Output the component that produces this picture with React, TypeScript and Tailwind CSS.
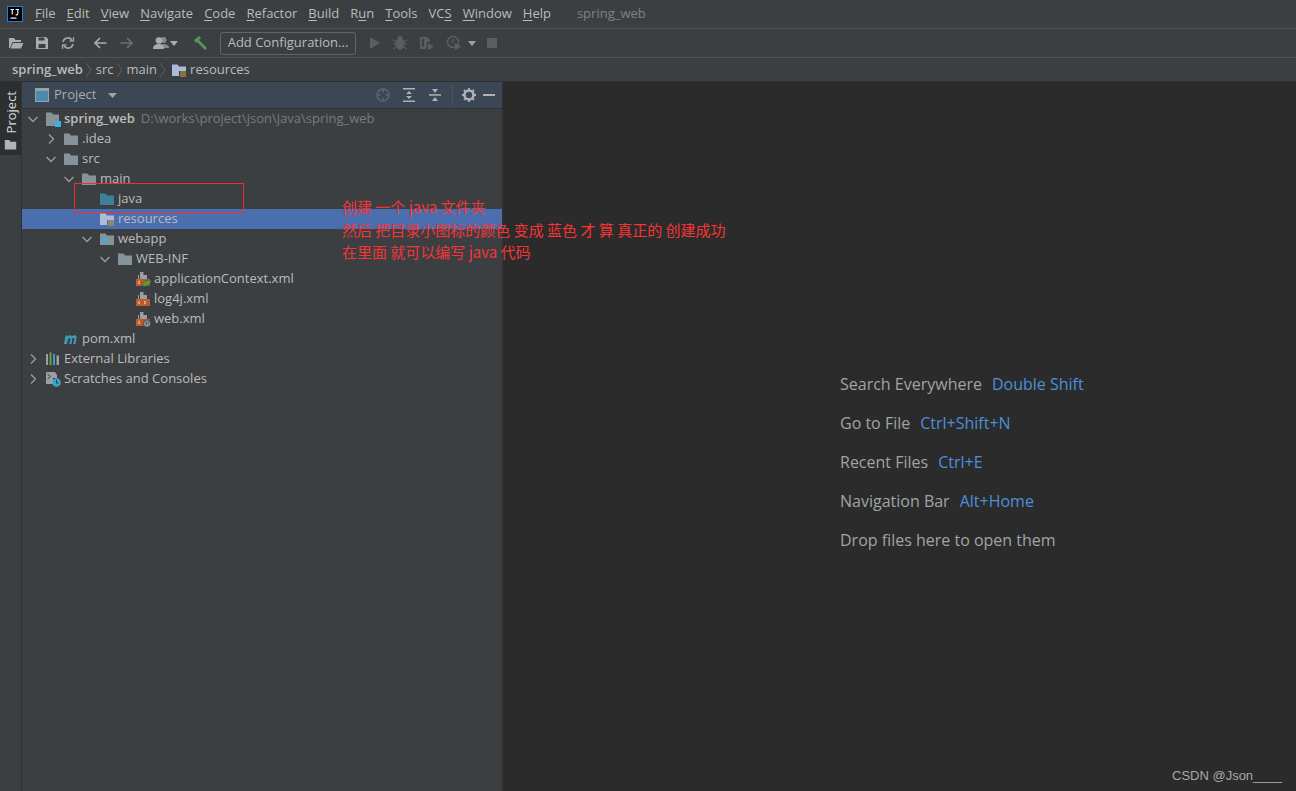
import React from "react";

const F = "font-['Open_Sans','Noto_Sans',sans-serif]";

function Folder({ c = "#87939a", size = 16 }: { c?: string; size?: number }) {
  return (
    <svg width={size} height={size} viewBox="0 0 16 16" className="shrink-0">
      <path d="M1 2.5h5.5L8 4.5h7V14H1z" fill={c} />
    </svg>
  );
}

function Chevron({ open }: { open: boolean }) {
  return (
    <svg width="12" height="12" viewBox="0 0 12 12" className="shrink-0" fill="none" stroke="#9a9d9f" strokeWidth="1.3">
      {open ? <path d="M1.5 4L6 8.5 10.5 4" /> : <path d="M4 1.5L8.5 6 4 10.5" />}
    </svg>
  );
}

function Lines() {
  return <path d="M9 10h6M9 12h6M9 14h6" stroke="#d6a032" strokeWidth="1.1" />;
}

function RootIcon() {
  return (
    <svg width="16" height="16" viewBox="0 0 16 16" className="shrink-0">
      <path d="M1 1.5h5.5L8 3.5h6V10H10v5H1z" fill="#87939a" />
      <rect x="10" y="10" width="6" height="6" fill="#3cb1e0" />
    </svg>
  );
}

function ResIcon() {
  return (
    <svg width="16" height="16" viewBox="0 0 16 16" className="shrink-0">
      <path d="M1 2.5h5.5L8 4.5h7V9H8v5H1z" fill="#a9bcd8" />
      <Lines />
    </svg>
  );
}

function WebIcon() {
  return (
    <svg width="16" height="16" viewBox="0 0 16 16" className="shrink-0">
      <path d="M1 2.5h5.5L8 4.5h7V14H1z" fill="#87939a" />
      <circle cx="6" cy="9" r="2.6" fill="#3cb1e0" />
    </svg>
  );
}

function XmlIcon({ badge }: { badge?: "leaf" | "globe" }) {
  return (
    <svg width="16" height="16" viewBox="0 0 16 16" className="shrink-0">
      <path d="M5 1h3.5v3H12v4H5z M3 4h1v4H3z" fill="#9a9fa3" />
      <rect x="1" y="8" width="14" height="7" fill="#bd5b2b" />
      <path d="M5 10l-2 1.5 2 1.5" stroke="#e8e8e8" fill="none" strokeWidth="0.9" />
      {!badge && <path d="M9 10l2 1.5-2 1.5" stroke="#e8e8e8" fill="none" strokeWidth="0.9" />}
      {badge === "leaf" && <path d="M7 15c0-4 3-6 9-6 0 5-3 7-9 6z" fill="#5f9a3a" stroke="#3c3f41" strokeWidth="0.6" />}
      {badge === "globe" && (
        <g>
          <circle cx="12" cy="12.5" r="3.7" fill="#8d9499" stroke="#3c3f41" strokeWidth="0.8" />
          <path d="M10 11l2 1-1 2M13 10.5l1 2" stroke="#3c3f41" strokeWidth="0.8" fill="none" />
        </g>
      )}
    </svg>
  );
}

function PomIcon() {
  return (
    <svg width="18" height="16" viewBox="0 0 18 16" className="shrink-0">
      <path
        d="M2 13l1.6-8.5h2l-.2 1c.9-.8 1.8-1.2 2.6-1.2 1 0 1.6.5 1.8 1.3.9-.9 1.9-1.3 2.8-1.3 1.5 0 2.2 1 1.9 2.6L13.500 13h-2.200l1-5c.1-.8-.1-1.100-.7-1.100-.5 0-1 .3-1.500.8L9.500 13H7.300l1-5c.1-.8-.1-1.100-.7-1.100-.5 0-1 .3-1.500.8L5 13z"
        fill="#3f9ab3"
      />
    </svg>
  );
}

function LibIcon() {
  return (
    <svg width="16" height="16" viewBox="0 0 16 16" className="shrink-0">
      <rect x="1" y="3" width="2" height="11" fill="#9a9fa3" />
      <rect x="4.500" y="1.500" width="2" height="12.500" fill="#62a33f" />
      <rect x="8" y="3" width="2" height="11" fill="#3e9ac6" />
      <rect x="11.500" y="4.500" width="2.500" height="9.500" fill="#9a9fa3" />
    </svg>
  );
}

function ScratchIcon() {
  return (
    <svg width="16" height="16" viewBox="0 0 16 16" className="shrink-0">
      <path d="M1 1h9l2 3v3H8v6H1z" fill="#9a9fa3" />
      <path d="M2.500 3l3 2.500-3 2.500" stroke="#3c3f41" strokeWidth="1" fill="none" />
      <circle cx="11.500" cy="11.500" r="4.300" fill="#3ba3c9" />
      <path d="M11.500 9v3h2" stroke="#1f3a45" strokeWidth="1" fill="none" />
    </svg>
  );
}

type RowP = {
  pad: string;
  open?: boolean;
  icon: React.ReactNode;
  children: React.ReactNode;
  sel?: boolean;
};

function Row({ pad, open, icon, children, sel }: RowP) {
  return (
    <div className={`flex h-5 items-center ${pad} ${sel ? "bg-[#4b6eaf]" : ""}`}>
      <span className="flex w-[14px] shrink-0 justify-center">{open !== undefined && <Chevron open={open} />}</span>
      <span className="ml-[5px] flex w-4 shrink-0 justify-center">{icon}</span>
      <span className="ml-[3px] flex items-baseline whitespace-nowrap">{children}</span>
    </div>
  );
}

function Menu({ pre = "", u, post = "", cls = "" }: { pre?: string; u: string; post?: string; cls?: string }) {
  return (
    <span className={`whitespace-nowrap ${cls}`}>
      {pre}
      <span className="underline underline-offset-2">{u}</span>
      {post}
    </span>
  );
}

function Sep() {
  return <span className="h-[19px] w-px shrink-0 bg-[#515151]" />;
}

function Crumb() {
  return (
    <svg width="8" height="16" viewBox="0 0 8 16" className="shrink-0 mx-[2px]" fill="none" stroke="#5c5f61" strokeWidth="1">
      <path d="M1 1l5 7-5 7" />
    </svg>
  );
}

function Hint({ a, b }: { a: string; b: string }) {
  return (
    <div className="flex h-[39px] items-center whitespace-nowrap text-[16px]">
      <span className="text-[#a0a4a6]">{a}</span>
      <span className="ml-[10px] text-[#4d8fdc]">{b}</span>
    </div>
  );
}

export default function App() {
  return (
    <div className={`relative flex h-[791px] w-[1296px] flex-col overflow-hidden bg-[#3c3f41] text-[13px] text-[#bbbbbb] ${F}`}>
      {/* menu bar */}
      <div className="flex h-[29px] shrink-0 items-center border-b border-[#515151] pl-[7px]">
        <svg width="16" height="16" viewBox="0 0 16 16" className="shrink-0">
          <rect x="0.500" y="0.500" width="15" height="15" fill="#000" stroke="#1c7fe0" />
          <path d="M3.500 3.500h3.500M5.200 3.500v5M8.500 3.500h3.500M10.800 3.500v4.300c0 .8-.6 1.200-2.200 1" stroke="#fff" strokeWidth="1.100" fill="none" />
          <rect x="3.500" y="11.500" width="6" height="1.200" fill="#fff" />
        </svg>
        <div className="ml-3 flex items-center gap-[11px] text-[13px]">
          <Menu u="F" post="ile" />
          <Menu u="E" post="dit" />
          <Menu u="V" post="iew" />
          <Menu u="N" post="avigate" />
          <Menu u="C" post="ode" />
          <Menu u="R" post="efactor" />
          <Menu u="B" post="uild" />
          <Menu pre="R" u="u" post="n" />
          <Menu u="T" post="ools" />
          <Menu pre="VC" u="S" />
          <Menu u="W" post="indow" />
          <Menu u="H" post="elp" />
        </div>
        <span className="ml-[26px] text-[#7d8285]">spring_web</span>
      </div>

      {/* toolbar */}
      <div className="flex h-[29px] shrink-0 items-center border-b border-[#515151] pl-[8px]">
        <svg width="16" height="16" viewBox="0 0 16 16" className="shrink-0">
          <path d="M1 3h5l1.500 2H13v2H4.500L2 13H1z M5 8h10.500L13 13.500H2.500z" fill="#a9adb0" />
        </svg>
        <svg width="14" height="14" viewBox="0 0 14 14" className="ml-[11px] shrink-0">
          <path d="M1 1h10l2 2v10H1z" fill="#a9adb0" />
          <rect x="3.500" y="1.500" width="6" height="3" fill="#3c3f41" />
          <rect x="3.500" y="8" width="7" height="4" fill="#3c3f41" />
        </svg>
        <svg width="14" height="14" viewBox="0 0 14 14" className="ml-[12px] shrink-0" fill="none" stroke="#a0a4a6" strokeWidth="1.600">
          <path d="M2 6a5 5 0 0 1 9-2M12 8a5 5 0 0 1-9 2" />
          <path d="M12.500 1v4h-4M1.500 13V9h4" strokeWidth="1.300" />
        </svg>
        <span className="ml-[9px]"><Sep /></span>
        <svg width="14" height="14" viewBox="0 0 14 14" className="ml-[9px] shrink-0" fill="none" stroke="#a9adb0" strokeWidth="1.700">
          <path d="M13.500 7H2M7 2L2 7l5 5" />
        </svg>
        <svg width="14" height="14" viewBox="0 0 14 14" className="ml-[13px] shrink-0" fill="none" stroke="#6b6f71" strokeWidth="1.700">
          <path d="M.5 7H12M7 2l5 5-5 5" />
        </svg>
        <span className="ml-[9px]"><Sep /></span>
        <svg width="18" height="14" viewBox="0 0 18 14" className="ml-[9px] shrink-0" fill="#a9adb0">
          <circle cx="11.500" cy="4" r="3" fill="#85898c" />
          <path d="M8 12c0-3 2-4 4-4s5 1 5 4z" fill="#85898c" />
          <circle cx="7" cy="4.500" r="3.300" />
          <path d="M1 13c0-4 3-5 6-5s5 1 5 5z" />
        </svg>
        <svg width="8" height="5" viewBox="0 0 8 5" className="shrink-0" fill="#a9adb0">
          <path d="M0 0h8L4 5z" />
        </svg>
        <span className="ml-[7px]"><Sep /></span>
        <svg width="16" height="16" viewBox="0 0 16 16" className="ml-[8px] shrink-0">
          <path d="M1 5l5-4 2 2-2 2 8 8-2 2-8-8-1 1z" fill="#4e9a55" />
        </svg>
        <button className="ml-[11px] flex h-[23px] w-[136px] items-center justify-center rounded-[3px] border border-[#646464] text-[13px] text-[#bbbbbb]">
          Add Configuration...
        </button>
        <svg width="12" height="12" viewBox="0 0 12 12" className="ml-[13px] shrink-0" fill="#5b5e60">
          <path d="M1 0l10 6-10 6z" />
        </svg>
        <svg width="14" height="14" viewBox="0 0 14 14" className="ml-[12px] shrink-0" fill="#5b5e60">
          <ellipse cx="7" cy="8" rx="4.500" ry="5.500" />
          <circle cx="7" cy="2.500" r="2.500" />
          <path d="M0 4l3 2M14 4l-3 2M0 8h3M14 8h-3M0 13l3-2M14 13l-3-2" stroke="#5b5e60" strokeWidth="1.200" />
        </svg>
        <svg width="16" height="16" viewBox="0 0 16 16" className="ml-[12px] shrink-0" fill="#5b5e60">
          <path d="M1 2h6v1.800H3v8h4V14H1z" />
          <path d="M5 2h3l3 3v2H8v5H5z" />
          <path d="M9 8l6 3.500L9 15z" />
        </svg>
        <svg width="16" height="16" viewBox="0 0 16 16" className="ml-[11px] shrink-0">
          <circle cx="7" cy="7" r="5.500" fill="none" stroke="#5b5e60" strokeWidth="1.500" />
          <path d="M7 4v3h-2" fill="none" stroke="#5b5e60" strokeWidth="1.200" />
          <path d="M9 8l6 3.500L9 15z" fill="#5b5e60" />
        </svg>
        <svg width="8" height="5" viewBox="0 0 8 5" className="ml-[6px] shrink-0" fill="#a0a4a6">
          <path d="M0 0h8L4 5z" />
        </svg>
        <span className="ml-[11px] h-[10px] w-[10px] shrink-0 bg-[#5b5e60]" />
        <span className="ml-[11px]"><Sep /></span>
      </div>

      {/* breadcrumb */}
      <div className="flex h-[24px] shrink-0 items-center border-b border-[#2f3133] pl-3">
        <span className="font-semibold">spring_web</span>
        <Crumb />
        <span className="ml-[1px]">src</span>
        <Crumb />
        <span className="ml-[1px]">main</span>
        <Crumb />
        <span className="ml-[2px]"><ResCrumb /></span>
        <span className="ml-[3px]">resources</span>
      </div>

      {/* main */}
      <div className="flex min-h-0 flex-1">
        <div className="flex w-[22px] shrink-0 flex-col border-r border-[#323232]">
          <div className="flex h-[73px] flex-col items-center gap-[5px] bg-[#2d2e2f] pt-[9px]">
            <span className="text-[13px] leading-[14px] text-[#d8d8d8] [writing-mode:vertical-rl] rotate-180">Project</span>
            <Folder c="#b0b4b6" size={13} />
          </div>
        </div>

        <div className="flex w-[480px] shrink-0 flex-col">
          <div className="flex h-[27px] shrink-0 items-center border-b border-[#323232] bg-[#3b4754] pl-[13px]">
            <svg width="14" height="14" viewBox="0 0 14 14" className="shrink-0">
              <rect x="0.500" y="0.500" width="13" height="13" fill="#4a8bb0" stroke="#9aa0a4" />
              <rect x="1" y="1" width="12" height="2" fill="#9aa0a4" />
            </svg>
            <span className="ml-[5px] text-[#a9adb0]">Project</span>
            <svg width="9" height="5" viewBox="0 0 9 5" className="ml-[12px] shrink-0" fill="#a0a4a6">
              <path d="M0 0h9L4.500 5z" />
            </svg>
            <div className="ml-auto flex items-center">
              <svg width="14" height="14" viewBox="0 0 14 14" fill="none" stroke="#5d6670" strokeWidth="1.500">
                <circle cx="7" cy="7" r="6" />
                <path d="M7 1v3.500M7 9.500V13M1 7h3.500M9.500 7H13" />
              </svg>
              <svg width="14" height="14" viewBox="0 0 14 14" className="ml-[12px]" fill="#aeb2b5">
                <path d="M1 0h12v1.500H1zM1 12.500h12V14H1z" />
                <path d="M7 3l3 3H4zM7 11L4 8h6z" />
              </svg>
              <svg width="14" height="14" viewBox="0 0 14 14" className="ml-[12px]" fill="#aeb2b5">
                <path d="M1 6.200h12v1.500H1z" />
                <path d="M7 5L4 1h6zM7 9l3 4H4z" />
              </svg>
              <span className="ml-[10px] h-[21px] w-px bg-[#4a545e]" />
              <svg width="14" height="14" viewBox="0 0 14 14" className="ml-[9px]">
                <circle cx="7" cy="7" r="4.500" fill="none" stroke="#aeb2b5" strokeWidth="2.600" />
                <path d="M7 0v14M0 7h14M2 2l10 10M12 2L2 12" stroke="#aeb2b5" strokeWidth="1.800" strokeDasharray="2.200 9.600" />
              </svg>
              <span className="ml-[7px] mr-[7px] h-[2px] w-[12px] bg-[#aeb2b5]" />
            </div>
          </div>

          <div className="flex flex-col text-[13px]">
            <Row pad="pl-[4px]" open icon={<RootIcon />}>
              <span className="font-semibold">spring_web</span>
              <span className="ml-[6px] text-[#787b7d]">D:\works\project\json\java\spring_web</span>
            </Row>
            <Row pad="pl-[22px]" open={false} icon={<Folder />}>.idea</Row>
            <Row pad="pl-[22px]" open icon={<Folder />}>src</Row>
            <Row pad="pl-[40px]" open icon={<Folder />}>main</Row>
            <Row pad="pl-[58px]" icon={<Folder c="#3d7f9d" />}>java</Row>
            <Row pad="pl-[58px]" icon={<ResIcon />} sel>resources</Row>
            <Row pad="pl-[58px]" open icon={<WebIcon />}>webapp</Row>
            <Row pad="pl-[76px]" open icon={<Folder />}>WEB-INF</Row>
            <Row pad="pl-[94px]" icon={<XmlIcon badge="leaf" />}>applicationContext.xml</Row>
            <Row pad="pl-[94px]" icon={<XmlIcon />}>log4j.xml</Row>
            <Row pad="pl-[94px]" icon={<XmlIcon badge="globe" />}>web.xml</Row>
            <Row pad="pl-[22px]" icon={<PomIcon />}>pom.xml</Row>
            <Row pad="pl-[4px]" open={false} icon={<LibIcon />}>External Libraries</Row>
            <Row pad="pl-[4px]" open={false} icon={<ScratchIcon />}>Scratches and Consoles</Row>
          </div>
        </div>

        <div className="flex min-w-0 flex-1 flex-col border-l border-[#323232] bg-[#2b2b2b] pl-[337px] pt-[282px]">
          <Hint a="Search Everywhere" b="Double Shift" />
          <Hint a="Go to File" b="Ctrl+Shift+N" />
          <Hint a="Recent Files" b="Ctrl+E" />
          <Hint a="Navigation Bar" b="Alt+Home" />
          <div className="flex h-[39px] items-center whitespace-nowrap text-[16px] text-[#a0a4a6]">Drop files here to open them</div>
        </div>
      </div>

      {/* annotations over the screenshot */}
      <div className="absolute left-[74px] top-[183px] h-[30px] w-[170px] border border-[#f03030]" />
      <div className="absolute left-[342px] top-[196px] whitespace-nowrap font-['Noto_Sans_CJK_SC','Noto_Sans',sans-serif] text-[15px] leading-[22.500px] text-[#f53535]">
        <div>创建 一个 java 文件夹</div>
        <div>然后 把目录小图标的颜色 变成 蓝色 才 算 真正的 创建成功</div>
        <div>在里面 就可以编写 java 代码</div>
      </div>
      <div className="absolute left-[1172px] top-[766px] whitespace-nowrap font-['Liberation_Sans',sans-serif] text-[13px] text-[#a8a8a8]">CSDN @Json____</div>
    </div>
  );
}

function ResCrumb() {
  return <ResIcon />;
}
